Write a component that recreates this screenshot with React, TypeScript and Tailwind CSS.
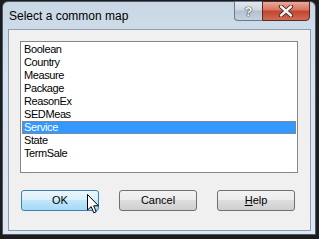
const items = ["Boolean", "Country", "Measure", "Package", "ReasonEx", "SEDMeas", "Service", "State", "TermSale"];

const selected = "Service";

function Button({ children, hot }: { children: React.ReactNode; hot?: boolean }) {
  return (
    <button
      className={`flex h-[21px] w-[78px] items-center justify-center rounded-[3px] border text-[11px] text-black ${
        hot
          ? "border-[#3c7fb1] bg-[linear-gradient(#eaf6fd_0%,#d9f0fc_50%,#bee6fd_50%,#a7d9f5_100%)]"
          : "border-[#707070] bg-[linear-gradient(#f2f2f2_0%,#ebebeb_50%,#dddddd_50%,#cfcfcf_100%)]"
      }`}
    >
      {children}
    </button>
  );
}

export default function App() {
  return (
    <div
      className="relative h-[239px] w-[319px] overflow-hidden bg-[#1c1c1c] pl-[2px] pt-px"
      style={{ fontFamily: '"Liberation Sans", Arial, sans-serif' }}
    >
      <div className="relative flex h-[234px] w-[314px] flex-col rounded-t-[6px] border border-[#4a5a6a] bg-[linear-gradient(#c9d7e5,#d6e2ee_30%,#dde7f1)]">
        {/* title bar */}
        <div className="flex h-[27px] shrink-0 items-center pl-[6px] pt-px text-[12px] text-black">
          Select a common map
        </div>

        {/* caption buttons */}
        <div className="absolute right-[5px] top-[-1px] flex h-[20px]">
          <div className="flex w-[28px] items-center justify-center rounded-bl-[4px] border border-r-0 border-[#6a7a8c] bg-[linear-gradient(#e2e8ef_0%,#ccd6e1_45%,#b3c1d0_50%,#c4d1de_100%)]">
            <span
              className="text-[13px] font-bold leading-none text-white"
              style={{ textShadow: "0 0 1px #333, 0 0 1px #333, 0 0 1px #333" }}
            >
              ?
            </span>
          </div>
          <div className="flex w-[48px] items-center justify-center rounded-br-[4px] border border-[#5a2a22] bg-[linear-gradient(#e9a99b_0%,#d8725f_45%,#c2452f_50%,#d16a55_100%)]">
            <svg width="16" height="12" viewBox="0 0 16 12">
              <path
                d="M3 1.5 L13 10.5 M13 1.5 L3 10.5"
                stroke="#3b2420"
                strokeWidth="4.2"
                strokeLinecap="round"
              />
              <path
                d="M3 1.5 L13 10.5 M13 1.5 L3 10.5"
                stroke="#f4f4f4"
                strokeWidth="2.4"
                strokeLinecap="round"
              />
            </svg>
          </div>
        </div>

        {/* client area */}
        <div className="ml-[5px] flex h-[202px] w-[303px] flex-col border border-[#8e9cab] bg-[#f0f0f0] pl-[11px] pt-[11px]">
          <div className="h-[132px] w-[278px] border border-[#828790] bg-white pt-px">
            {items.map((it) =>
              it === selected ? (
                <div
                  key={it}
                  className="ml-px mr-px h-[13px] border border-dotted border-[#c9783a] bg-[#3399ff] pl-[1px] text-[11px] leading-[11px] tracking-[-0.4px] text-white"
                >
                  {it}
                </div>
              ) : (
                <div key={it} className="ml-px h-[13px] pl-[2px] text-[11px] leading-[13px] tracking-[-0.4px] text-black">
                  {it}
                </div>
              )
            )}
          </div>

          <div className="ml-px mt-[17px] flex gap-[20px]">
            <Button hot>OK</Button>
            <Button>Cancel</Button>
            <Button>
              <span>
                <span className="underline">H</span>elp
              </span>
            </Button>
          </div>
        </div>
      </div>

      {/* mouse cursor */}
      <svg className="absolute left-[87px] top-[194px]" width="13" height="20" viewBox="0 0 13 20">
        <path
          d="M0.5 0.5 L0.5 16 L4.2 12.6 L6.8 18.8 L9.2 17.8 L6.7 11.8 L11.5 11.8 Z"
          fill="white"
          stroke="black"
          strokeWidth="1"
          strokeLinejoin="miter"
        />
      </svg>
    </div>
  );
}
